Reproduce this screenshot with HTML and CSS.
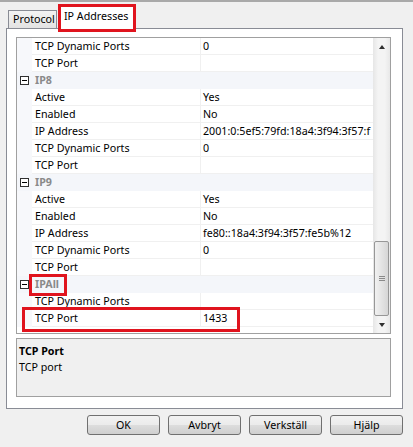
FILE: index.html
```html
<!DOCTYPE html>
<html>
<head>
<meta charset="utf-8">
<link rel="stylesheet" href="styles.css">
</head>
<body>
<div class="window">
  <div class="topline"></div>
  <div class="tabs">
    <div class="tab">Protocol</div>
    <div class="tab active">IP Addresses</div>
  </div>
  <div class="panel">
    <div class="grid">
      <div class="rows">
        <div class="row"><span class="m"></span><span class="n">TCP Dynamic Ports</span><span class="v">0</span></div>
        <div class="row"><span class="m"></span><span class="n">TCP Port</span><span class="v"></span></div>
        <div class="row cat"><span class="m"><span class="box"></span></span><span class="cn">IP8</span></div>
        <div class="row"><span class="m"></span><span class="n">Active</span><span class="v">Yes</span></div>
        <div class="row"><span class="m"></span><span class="n">Enabled</span><span class="v">No</span></div>
        <div class="row"><span class="m"></span><span class="n">IP Address</span><span class="v">2001:0:5ef5:79fd:18a4:3f94:3f57:f</span></div>
        <div class="row"><span class="m"></span><span class="n">TCP Dynamic Ports</span><span class="v">0</span></div>
        <div class="row"><span class="m"></span><span class="n">TCP Port</span><span class="v"></span></div>
        <div class="row cat"><span class="m"><span class="box"></span></span><span class="cn">IP9</span></div>
        <div class="row"><span class="m"></span><span class="n">Active</span><span class="v">Yes</span></div>
        <div class="row"><span class="m"></span><span class="n">Enabled</span><span class="v">No</span></div>
        <div class="row"><span class="m"></span><span class="n">IP Address</span><span class="v">fe80::18a4:3f94:3f57:fe5b%12</span></div>
        <div class="row"><span class="m"></span><span class="n">TCP Dynamic Ports</span><span class="v">0</span></div>
        <div class="row"><span class="m"></span><span class="n">TCP Port</span><span class="v"></span></div>
        <div class="row cat"><span class="m"><span class="box"></span></span><span class="cn">IPAll</span></div>
        <div class="row"><span class="m"></span><span class="n">TCP Dynamic Ports</span><span class="v"></span></div>
        <div class="row"><span class="m"></span><span class="n">TCP Port</span><span class="v">1433</span></div>
      </div>
      <div class="scrollbar">
        <div class="sbtn"><span class="arr up"></span></div>
        <div class="track">
          <div class="thumb"><span class="grip"></span></div>
        </div>
        <div class="sbtn"><span class="arr down"></span></div>
      </div>
    </div>
    <div class="desc">
      <div class="dtitle">TCP Port</div>
      <div class="dtext">TCP port</div>
    </div>
  </div>
  <div class="buttons">
    <button class="btn">OK</button>
    <button class="btn">Avbryt</button>
    <button class="btn">Verkställ</button>
    <button class="btn">Hjälp</button>
  </div>
  <div class="mark mark-tab"></div>
  <div class="mark mark-cat"></div>
  <div class="mark mark-row"></div>
</div>
</body>
</html>
```

FILE: styles.css
```css
html, body {
  margin: 0;
  padding: 0;
}
body {
  background: #f0f0f0;
  font-family: "Noto Sans", "Open Sans", sans-serif;
  font-size: 10.7px;
  color: #000;
}
.window {
  position: relative;
  width: 413px;
  height: 447px;
  overflow: hidden;
  background: #f0f0f0;
}
.topline {
  height: 2px;
  background: #a9a9a9;
}
.tabs {
  display: flex;
  align-items: flex-end;
  height: 26px;
  padding-left: 8px;
  position: relative;
  z-index: 2;
}
.tab {
  box-sizing: border-box;
  height: 18px;
  padding: 0 4px;
  width: 49px;
  border: 1px solid #898c95;
  border-bottom: none;
  background: linear-gradient(#f3f3f3, #e3e3e3);
  line-height: 17px;
  white-space: nowrap;
}
.tab.active {
  width: 77px;
  height: 23px;
  margin-left: 1px;
  margin-bottom: -1px;
  background: #fff;
  line-height: 18px;
  padding-left: 5px;
}
.panel {
  box-sizing: border-box;
  margin-left: 6px;
  width: 397px;
  height: 381px;
  border: 1px solid #898c95;
  background: #fff;
  padding: 8px 11px 11px 9px;
  display: flex;
  flex-direction: column;
  gap: 4px;
}
.grid {
  display: flex;
  height: 298px;
  box-sizing: border-box;
  border: 1px solid #a0a0a0;
  background: #fff;
}
.rows {
  flex: 1;
  overflow: hidden;
}
.row {
  display: grid;
  grid-template-columns: 15px 169px 1fr;
  height: 17px;
  box-sizing: border-box;
  line-height: 16px;
  white-space: nowrap;
}
.m {
  background: #f7f8fb;
  display: flex;
  align-items: center;
  justify-content: flex-end;
}
.n {
  padding-left: 3px;
  border-bottom: 1px solid #f0f0f0;
  border-right: 1px solid #f0f0f0;
  overflow: hidden;
}
.v {
  padding-left: 2px;
  border-bottom: 1px solid #f0f0f0;
  overflow: hidden;
}
.row.cat {
  background: #f4f6fa;
}
.row.cat .m {
  background: transparent;
  justify-content: flex-start;
  padding-left: 3px;
}
.cn {
  grid-column: 2 / 4;
  padding-left: 3px;
  font-weight: bold;
  color: #8a8a8a;
}
.box {
  width: 9px;
  height: 9px;
  box-sizing: border-box;
  border: 1px solid #303030;
  background: #fff;
  display: flex;
  align-items: center;
  justify-content: center;
}
.box::after {
  content: "";
  width: 5px;
  height: 1px;
  background: #000;
}
.scrollbar {
  width: 17px;
  display: flex;
  flex-direction: column;
  background: linear-gradient(90deg, #e6e6e6, #f4f4f4 30%, #f4f4f4 70%, #e8e8e8);
}
.sbtn {
  height: 17px;
  display: flex;
  align-items: center;
  justify-content: center;
}
.arr {
  width: 0;
  height: 0;
  border-left: 3px solid transparent;
  border-right: 3px solid transparent;
}
.arr.up {
  border-bottom: 4px solid #303030;
}
.arr.down {
  border-top: 4px solid #303030;
}
.track {
  flex: 1;
  display: flex;
  flex-direction: column;
  justify-content: flex-end;
}
.thumb {
  height: 75px;
  margin: 0 1px;
  box-sizing: border-box;
  border: 1px solid #979797;
  border-radius: 2px;
  background: linear-gradient(90deg, #f1f1f1, #e4e4e4 50%, #d6d6d6);
  display: flex;
  align-items: center;
  justify-content: center;
}
.grip {
  width: 6px;
  height: 5px;
  background: repeating-linear-gradient(#8a8a8a 0 1px, transparent 1px 2px);
}
.desc {
  box-sizing: border-box;
  height: 59px;
  border: 1px solid #a0a0a0;
  background: #f0f0f0;
  padding: 4px 2px;
  line-height: 16px;
}
.dtitle {
  font-weight: bold;
}
.buttons {
  display: flex;
  justify-content: flex-end;
  gap: 8px;
  padding-right: 10px;
  margin-top: 6px;
}
.btn {
  box-sizing: border-box;
  width: 73px;
  height: 20px;
  border: 1px solid #707070;
  border-radius: 3px;
  background: linear-gradient(#f2f2f2, #ebebeb 50%, #dddddd 51%, #cfcfcf);
  font-family: "Noto Sans", "Open Sans", sans-serif;
  font-size: 10.7px;
  padding: 0;
  line-height: 17px;
  color: #000;
}
.mark {
  position: absolute;
  border: 3px solid #e0141e;
  box-sizing: border-box;
  z-index: 5;
}
.mark-tab {
  left: 58px;
  top: 4px;
  width: 78px;
  height: 28px;
}
.mark-cat {
  left: 29px;
  top: 274px;
  width: 38px;
  height: 22px;
}
.mark-row {
  left: 22px;
  top: 307px;
  width: 218px;
  height: 25px;
}
```
